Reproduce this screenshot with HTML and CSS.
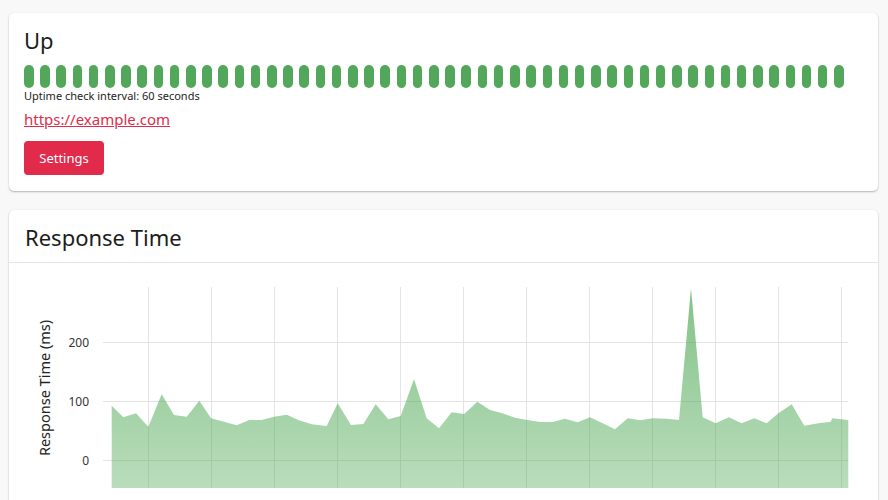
FILE: index.html
```html
<!DOCTYPE html>
<html lang="en">
<head>
<meta charset="utf-8">
<title>Monitor</title>
<link rel="stylesheet" href="styles.css">
</head>
<body>
<main class="page">
  <section class="card status-card">
    <h1 class="status-title">Up</h1>
    <div class="beats" id="beats"></div>
    <div class="interval">Uptime check interval: 60 seconds</div>
    <a class="site-link" href="#">https://example.com</a>
    <div><button class="btn-settings" type="button">Settings</button></div>
  </section>

  <section class="card chart-card">
    <header class="chart-header"><h2 class="chart-title">Response Time</h2></header>
    <div class="chart-body">
      <svg class="chart" width="869" height="237" viewBox="9 263 869 237" xmlns="http://www.w3.org/2000/svg">
        <defs>
          <linearGradient id="areaFill" gradientUnits="userSpaceOnUse" x1="0" y1="288" x2="0" y2="488">
            <stop offset="0" stop-color="rgb(72,165,78)" stop-opacity="0.68"/>
            <stop offset="1" stop-color="rgb(72,165,78)" stop-opacity="0.38"/>
          </linearGradient>
        </defs>
        <g class="grid">
          <line x1="103" y1="342.5" x2="848" y2="342.5"/>
          <line x1="103" y1="401.5" x2="848" y2="401.5"/>
          <line x1="103" y1="460.5" x2="848" y2="460.5"/>
          <line x1="148.5" y1="287" x2="148.5" y2="488"/>
          <line x1="211.5" y1="287" x2="211.5" y2="488"/>
          <line x1="274.5" y1="287" x2="274.5" y2="488"/>
          <line x1="337.5" y1="287" x2="337.5" y2="488"/>
          <line x1="400.5" y1="287" x2="400.5" y2="488"/>
          <line x1="463.5" y1="287" x2="463.5" y2="488"/>
          <line x1="526.5" y1="287" x2="526.5" y2="488"/>
          <line x1="589.5" y1="287" x2="589.5" y2="488"/>
          <line x1="652.5" y1="287" x2="652.5" y2="488"/>
          <line x1="715.5" y1="287" x2="715.5" y2="488"/>
          <line x1="778.5" y1="287" x2="778.5" y2="488"/>
          <line x1="841.5" y1="287" x2="841.5" y2="488"/>
        </g>
        <path class="area" fill="url(#areaFill)" d="M111.7,488 L111.7,405.7 L123.3,417.3 L136,413.3 L148.3,426.7 L161.7,394.3 L174,415 L186.7,416.7 L199.3,400.7 L211,418.3 L224,421.7 L236.7,425.3 L249.3,420 L261.7,420 L274,416.7 L286.7,414.7 L298.3,420 L311.7,424.3 L326.7,426 L337.7,403.3 L351,425 L363.3,424 L375.7,404.3 L388.3,419.3 L400.7,416 L414,379.3 L426.7,418.3 L439,428.3 L451.7,412.3 L464.3,414 L477.3,401.7 L490,410 L502.3,413.3 L515,417.7 L527.3,420 L540,422 L552.7,422 L565,418.7 L577.7,422.3 L590,417.3 L602.7,423.3 L615,429.3 L627.7,418.3 L640,420.3 L652.7,418.3 L666.7,418.7 L679,420 L691,288.3 L702.7,417.3 L715.7,423.3 L729,417.3 L741.7,423.3 L754.3,418.3 L766.7,423.3 L778.3,413.3 L791.7,404.3 L804.3,425.7 L818.3,423.3 L830.7,421.7 L832.3,418.3 L848.3,420 L848.3,488 Z"/>
        <g class="ticks">
          <text x="89" y="342.5">200</text>
          <text x="89" y="401.5">100</text>
          <text x="89" y="460.5">0</text>
        </g>
        <text class="axis-label" transform="translate(43.5 388) rotate(-90)">Response Time (ms)</text>
      </svg>
    </div>
  </section>
</main>
<script src="app.js"></script>
</body>
</html>
```

FILE: app.js
```js
var beats = document.getElementById('beats');
for (var i = 0; i < 51; i++) {
  var b = document.createElement('span');
  b.className = 'beat';
  beats.appendChild(b);
}
```

FILE: styles.css
```css
html, body {
  margin: 0;
  padding: 0;
  overflow: hidden;
  background: #f8f8f8;
}

body {
  font-family: "Noto Sans", "Open Sans", sans-serif;
  color: #1c1c1c;
}

.page {
  padding: 13px 10px 0 9px;
  display: flex;
  flex-direction: column;
  gap: 19px;
}

.card {
  background: #ffffff;
  border-radius: 5px;
  box-shadow: 0 1px 2px rgba(0, 0, 0, 0.28), 0 0 1px rgba(0, 0, 0, 0.06);
}

.status-card {
  padding: 13px 15px 16px 15px;
  display: flex;
  flex-direction: column;
}

.status-title {
  margin: 0;
  font-size: 22px;
  line-height: 28px;
  font-weight: 400;
}

.beats {
  margin-top: 11px;
  width: 820px;
  display: flex;
  justify-content: space-between;
}

.beat {
  display: block;
  width: 9.5px;
  height: 23px;
  border-radius: 5px;
  background: #52a75a;
}

.interval {
  font-size: 11px;
  line-height: 16px;
  color: #222;
}

.site-link {
  margin-top: 5px;
  font-size: 15px;
  line-height: 20px;
  color: #dc2d4c;
  text-decoration: underline;
  align-self: flex-start;
}

.btn-settings {
  margin-top: 12px;
  width: 80px;
  height: 34px;
  border: 0;
  border-radius: 4px;
  background: #e22a4b;
  color: #ffffff;
  font-family: "Noto Sans", "Open Sans", sans-serif;
  font-size: 13px;
  padding: 0;
  cursor: pointer;
}

.chart-card {
  display: flex;
  flex-direction: column;
}

.chart-header {
  padding: 14px 16px 12px 16px;
  border-bottom: 1px solid #e6e6e6;
}

.chart-title {
  margin: 0;
  font-size: 22px;
  line-height: 26px;
  font-weight: 400;
}

.chart-body {
  height: 260px;
}

.chart {
  display: block;
  font-family: "Noto Sans", "Open Sans", sans-serif;
}

.grid line {
  stroke: #e4e4e4;
  stroke-width: 1;
}

.ticks text {
  font-size: 12px;
  fill: #333;
  text-anchor: end;
  dominant-baseline: central;
}

.axis-label {
  font-size: 14.5px;
  fill: #222;
  text-anchor: middle;
  dominant-baseline: central;
}
```
